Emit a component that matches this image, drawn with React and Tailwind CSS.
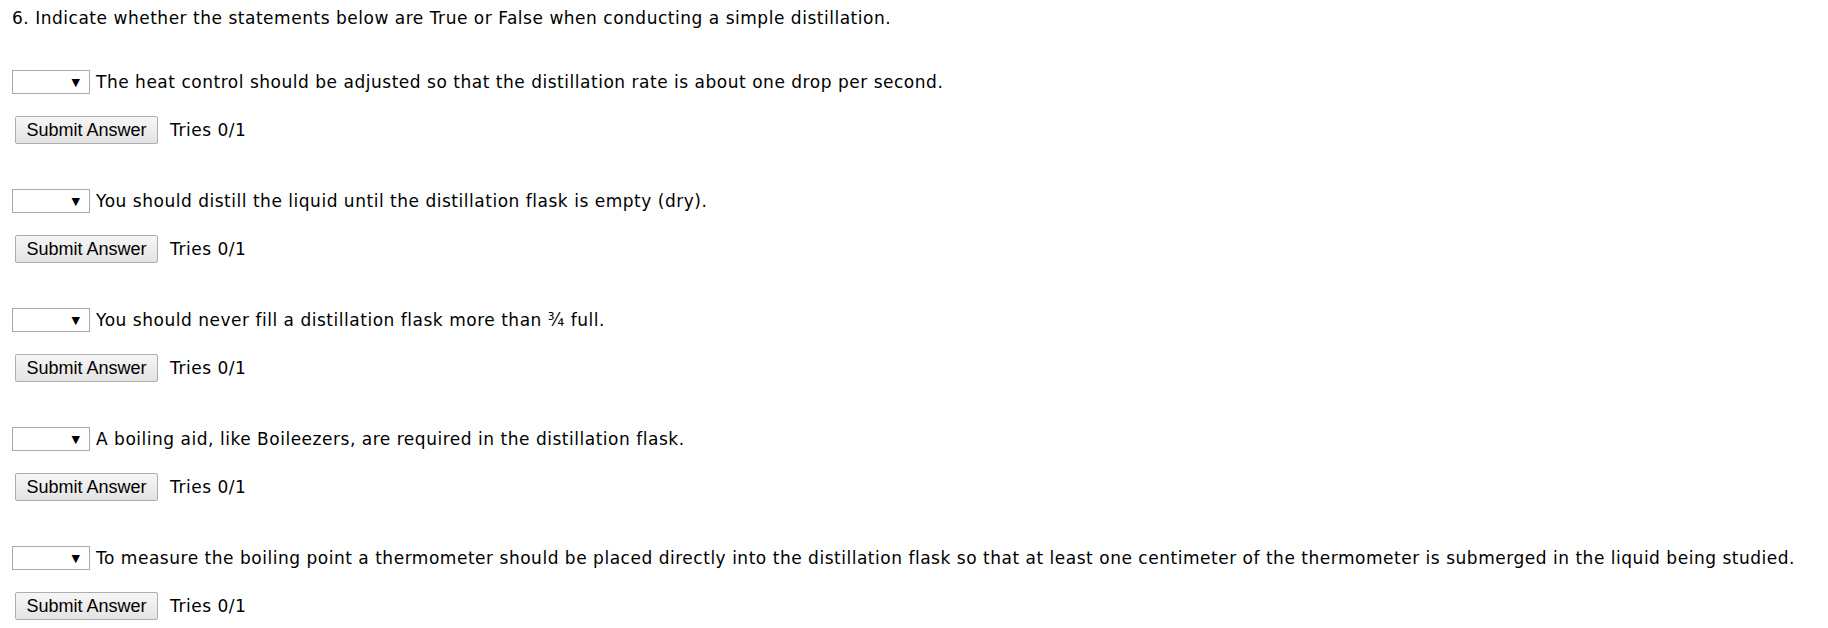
import React from 'react';

const statements = [
  'The heat control should be adjusted so that the distillation rate is about one drop per second.',
  'You should distill the liquid until the distillation flask is empty (dry).',
  'You should never fill a distillation flask more than \u00BE full.',
  'A boiling aid, like Boileezers, are required in the distillation flask.',
  'To measure the boiling point a thermometer should be placed directly into the distillation flask so that at least one centimeter of the thermometer is submerged in the liquid being studied.',
];

function Dropdown() {
  return (
    <div className="w-[78px] h-[24px] border border-[#a9a9a9] bg-white flex items-center justify-end pr-[9px] shrink-0">
      <span className="text-[11px] leading-none tracking-normal text-black">▼</span>
    </div>
  );
}

function Question({ text }) {
  return (
    <div className="flex flex-col">
      <div className="flex items-center h-[24px] pl-[12px]">
        <Dropdown />
        <span className="ml-[6px] whitespace-nowrap">{text}</span>
      </div>
      <div className="flex items-center h-[28px] mt-[22px] pl-[15px]">
        <button className="h-[28px] w-[143px] border border-[#adadad] rounded-[2px] bg-gradient-to-b from-[#f6f6f6] to-[#e3e3e3] text-[18px] leading-none tracking-normal text-black font-['Liberation_Sans',Arial,sans-serif]">
          Submit Answer
        </button>
        <span className="ml-[12px]">Tries 0/1</span>
      </div>
    </div>
  );
}

export default function App() {
  return (
    <div className="w-[1828px] h-[628px] bg-white text-black text-[17px] leading-[20px] tracking-[0.52px] font-['DejaVu_Sans',Verdana,sans-serif] overflow-hidden">
      <div className="pt-[8px] pl-[12px]">
        6. Indicate whether the statements below are True or False when conducting a simple distillation.
      </div>
      <div className="mt-[42px] flex flex-col gap-[45px]">
        {statements.map((s, i) => (
          <Question key={i} text={s} />
        ))}
      </div>
    </div>
  );
}
